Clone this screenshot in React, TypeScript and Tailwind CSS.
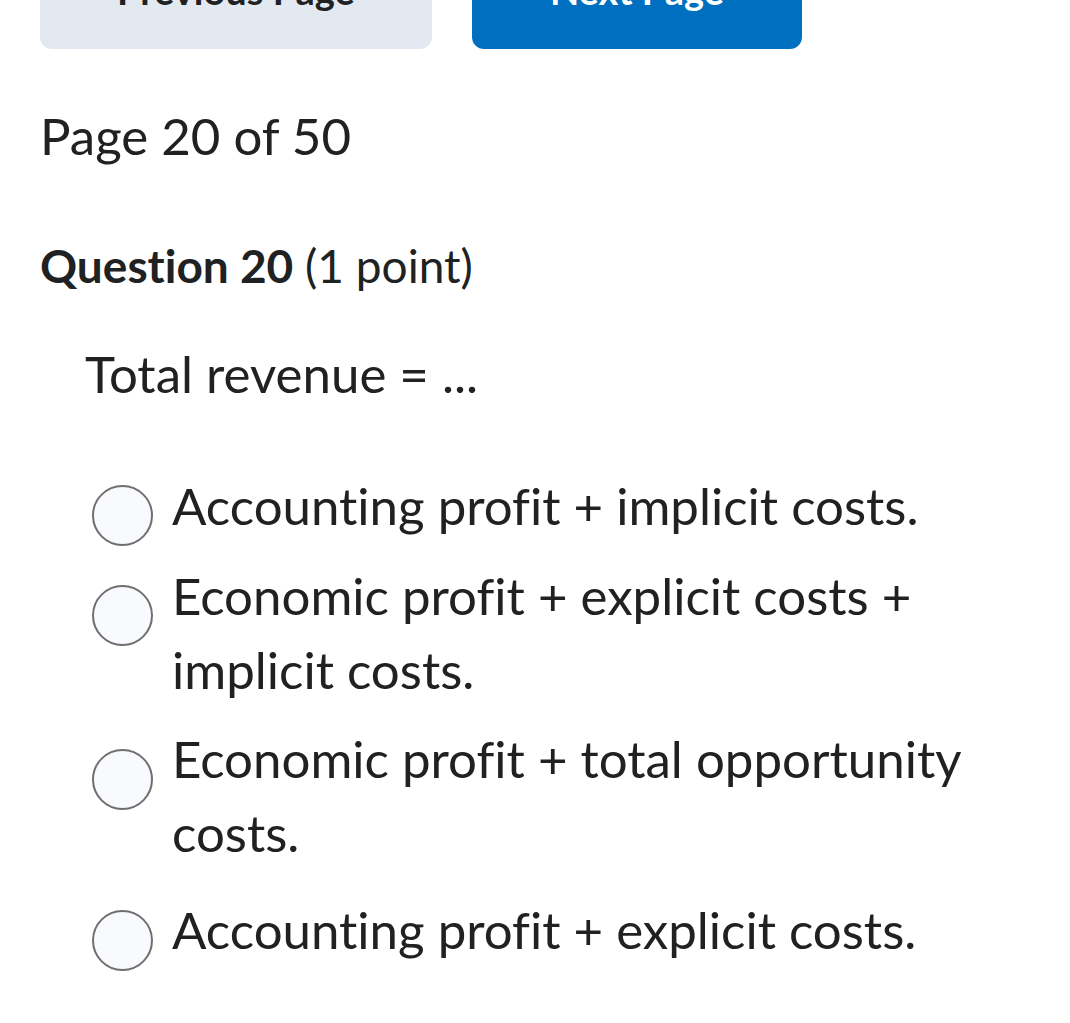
import React from "react";

const options: { lines: string; circleMt: string; rowMt: string }[] = [
  { lines: "Accounting profit + implicit costs.", circleMt: "mt-[16px]", rowMt: "mt-0" },
  { lines: "Economic profit + explicit costs + implicit costs.", circleMt: "mt-[26px]", rowMt: "mt-[13px]" },
  { lines: "Economic profit + total opportunity costs.", circleMt: "mt-[27px]", rowMt: "mt-[15px]" },
  { lines: "Accounting profit + explicit costs.", circleMt: "mt-[17px]", rowMt: "mt-[23px]" },
];

export default function App() {
  return (
    <div
      className="w-[1070px] h-[1023px] overflow-hidden bg-white text-[#202122] [font-variant-ligatures:none]"
      style={{ fontFamily: "Lato, 'Noto Sans', sans-serif" }}
    >
      <div className="flex gap-[40px] pl-[40px] mt-[-67px]">
        <div className="w-[392px] h-[116px] rounded-[12px] bg-[#e3e9f1] flex justify-center pt-[38px]">
          <span className="text-[38px] leading-[38px] font-bold text-[#202122]">Previous Page</span>
        </div>
        <div className="w-[330px] h-[116px] rounded-[12px] bg-[#006fbf] flex justify-center pt-[38px]">
          <span className="text-[38px] leading-[38px] font-bold text-white">Next Page</span>
        </div>
      </div>

      <div className="pl-[40px] mt-[57px] text-[51px] leading-[60px]">Page 20 of 50</div>

      <div className="pl-[40px] mt-[70px] text-[46px] leading-[60px]">
        <span className="font-bold">Question 20</span> (1 point)
      </div>

      <div className="pl-[85px] mt-[48px] text-[51px] leading-[60px]">Total revenue = ...</div>

      <div className="pl-[92px] pr-[60px] mt-[65px] flex flex-col">
        {options.map((o, i) => (
          <div key={i} className={`flex items-start gap-[19px] ${o.rowMt}`}>
            <div
              className={`w-[61px] h-[61px] shrink-0 rounded-full border-[2px] border-[#6f6f6f] bg-[#f9fafe] ${o.circleMt}`}
            />
            <div className="text-[51px] leading-[74px] w-[800px]">{o.lines}</div>
          </div>
        ))}
      </div>
    </div>
  );
}
